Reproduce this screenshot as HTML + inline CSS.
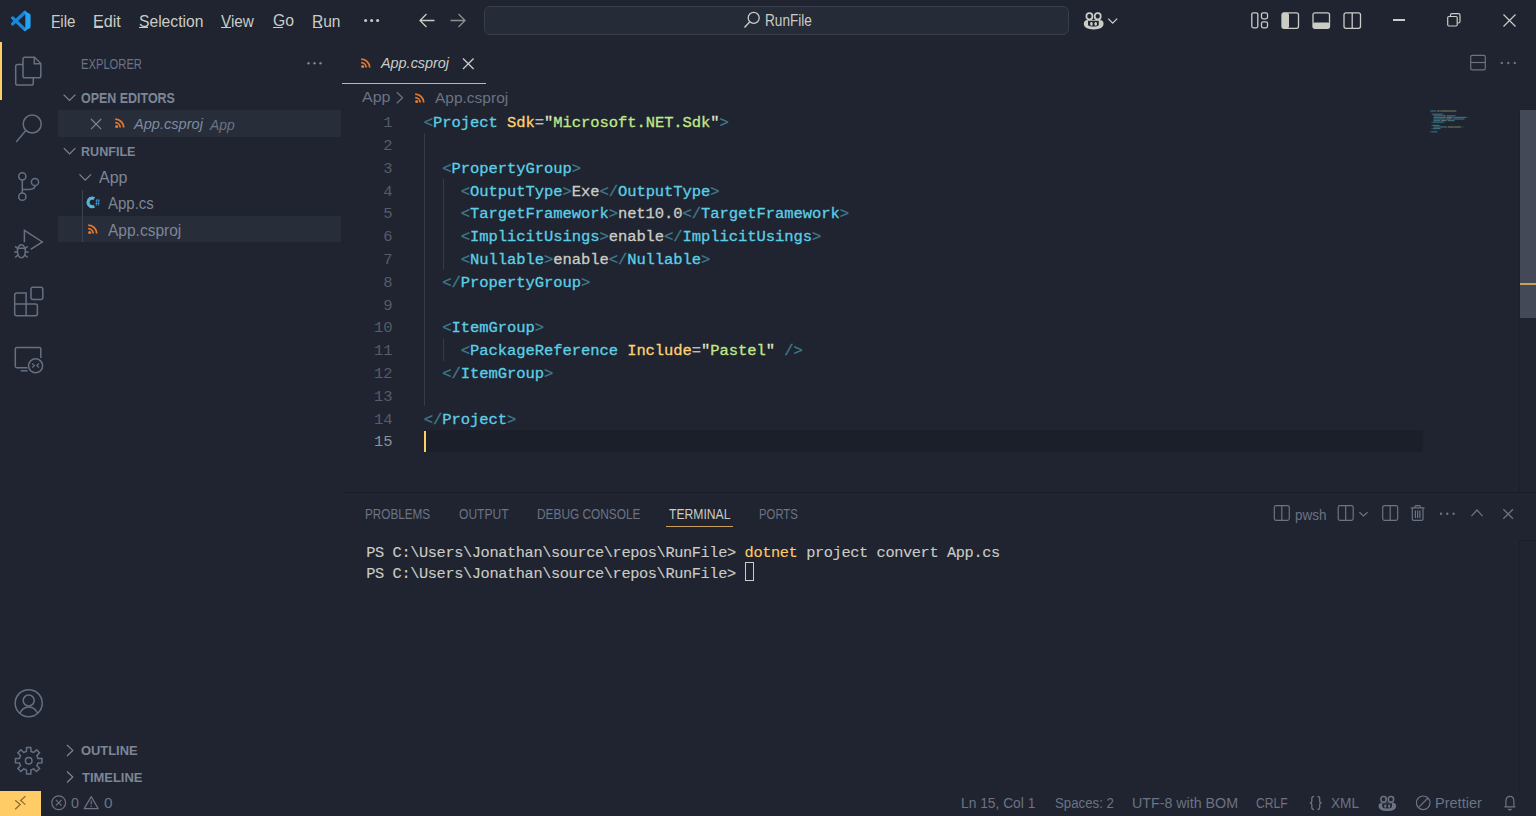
<!DOCTYPE html>
<html><head><meta charset="utf-8">
<style>
*{margin:0;padding:0;box-sizing:border-box}
html,body{width:1536px;height:816px;overflow:hidden;background:#1f2430}
body{position:relative;font-family:"Liberation Sans",sans-serif;color:#cbccc6}
.a{position:absolute}
.t{position:absolute;white-space:pre;line-height:1;transform-origin:0 0}
svg{position:absolute;overflow:visible}
.ln{position:absolute;font-family:"Liberation Mono",monospace;font-size:15.5px;line-height:1;white-space:pre;letter-spacing:-0.06px;color:#5c6370}
.cl{position:absolute;left:423.8px;-webkit-text-stroke:0.3px currentColor;font-family:"Liberation Mono",monospace;font-size:15.5px;line-height:1;white-space:pre;letter-spacing:-0.06px;color:#cbccc6}
.p{color:#3f7a8c}.g{color:#5ccfe6}.at{color:#ffd173}.st{color:#c2e88a}.q{color:#dfe5c8}.eq{color:#b8bcc0}
.term{position:absolute;left:366.2px;-webkit-text-stroke:0.12px currentColor;font-family:"Liberation Mono",monospace;font-size:15.3px;line-height:1;white-space:pre;letter-spacing:-0.38px;color:#cbccc6}
</style></head>
<body>
<!-- backgrounds -->
<div class="a" style="left:0;top:42px;width:2.4px;height:58px;background:#ffcc66"></div>
<div class="a" style="left:58px;top:110.2px;width:283px;height:26.4px;background:#282d3a"></div>
<div class="a" style="left:58px;top:215.8px;width:283px;height:26.4px;background:#282d3a"></div>
<div class="a" style="left:424px;top:429.6px;width:999px;height:22.8px;background:#1b1f29"></div>
<div class="a" style="left:343px;top:492px;width:1193px;height:1px;background:#191d27"></div>
<div class="a" style="left:0;top:790.9px;width:41px;height:25.1px;background:#ffcc66"></div>
<div class="a" style="left:483.5px;top:6px;width:585px;height:28.5px;border-radius:6px;background:#262b38;border:1px solid #383e4c"></div>
<div class="a" style="left:342px;top:82.5px;width:144px;height:1.6px;background:#e6b450"></div>
<div class="a" style="left:666.4px;top:525.8px;width:66.5px;height:1.4px;background:#c9a05a"></div>
<div class="a" style="left:1519px;top:110.3px;width:17px;height:208px;background:#434957"></div>
<div class="a" style="left:1519px;top:283.2px;width:17px;height:1.8px;background:#c9a05a"></div>
<div class="a" style="left:1518.9px;top:110px;width:1px;height:382px;background:#1b1f29"></div>
<div class="a" style="left:1518.9px;top:540px;width:1px;height:249px;background:#1b1f29"></div>
<div class="a" style="left:1519px;top:540px;width:17px;height:1px;background:#1b1f29"></div>
<div class="a" style="left:424px;top:430.5px;width:2.2px;height:21px;background:#ffcc66"></div>
<div class="a" style="left:424.3px;top:133px;width:1px;height:273px;background:#343a47"></div>
<div class="a" style="left:442.8px;top:179px;width:1px;height:91px;background:#343a47"></div>
<div class="a" style="left:442.8px;top:338px;width:1px;height:22.8px;background:#343a47"></div>
<div class="a" style="left:81.5px;top:190px;width:1px;height:52px;background:#3a4150"></div>
<div class="a" style="left:744.5px;top:561.6px;width:9.5px;height:19.8px;border:1px solid #cbccc6"></div>
<div class="t" style="left:50.76px;top:12.98px;font-size:16.44px;color:#cbccc6;transform:scaleX(0.924)">File</div>
<div class="t" style="left:93.16px;top:12.98px;font-size:16.44px;color:#cbccc6;transform:scaleX(0.981)">Edit</div>
<div class="t" style="left:138.56px;top:12.98px;font-size:16.44px;color:#cbccc6;transform:scaleX(0.952)">Selection</div>
<div class="t" style="left:221.25px;top:12.86px;font-size:16.44px;color:#cbccc6;transform:scaleX(0.932)">View</div>
<div class="t" style="left:272.67px;top:12.48px;font-size:17.02px;color:#cbccc6;transform:scaleX(0.925)">Go</div>
<div class="t" style="left:311.94px;top:12.77px;font-size:17.27px;color:#cbccc6;transform:scaleX(0.900)">Run</div>
<div class="t" style="left:765.38px;top:12.43px;font-size:16.03px;color:#cbccc6;transform:scaleX(0.849)">RunFile</div>
<div class="t" style="left:81.03px;top:56.57px;font-size:14.33px;color:#6b7384;transform:scaleX(0.781)">EXPLORER</div>
<div class="t" style="left:81.39px;top:91.80px;font-size:13.76px;color:#7d8696;font-weight:bold;transform:scaleX(0.906)">OPEN EDITORS</div>
<div class="t" style="left:134.26px;top:116.19px;font-size:15.34px;color:#7f8ba0;font-style:italic;transform:scaleX(0.952)">App.csproj</div>
<div class="t" style="left:210.48px;top:117.51px;font-size:14.24px;color:#6b7384;font-style:italic;transform:scaleX(0.973)">App</div>
<div class="t" style="left:81.07px;top:144.65px;font-size:13.53px;color:#7d8696;font-weight:bold;transform:scaleX(0.930)">RUNFILE</div>
<div class="t" style="left:98.68px;top:170.43px;font-size:15.83px;color:#7d8696;transform:scaleX(1.013)">App</div>
<div class="t" style="left:108.26px;top:195.37px;font-size:16.12px;color:#7d8696;transform:scaleX(0.930)">App.cs</div>
<div class="t" style="left:108.14px;top:223.11px;font-size:15.62px;color:#7d8696;transform:scaleX(0.994)">App.csproj</div>
<div class="t" style="left:81.17px;top:744.30px;font-size:13.48px;color:#7d8696;font-weight:bold;transform:scaleX(0.957)">OUTLINE</div>
<div class="t" style="left:81.54px;top:770.55px;font-size:13.53px;color:#7d8696;font-weight:bold;transform:scaleX(0.958)">TIMELINE</div>
<div class="t" style="left:381.05px;top:55.46px;font-size:15.48px;color:#cbccc6;font-style:italic;transform:scaleX(0.931)">App.csproj</div>
<div class="t" style="left:361.57px;top:88.59px;font-size:15.54px;color:#6b7384;transform:scaleX(1.031)">App</div>
<div class="t" style="left:435.44px;top:91.11px;font-size:14.79px;color:#6b7384;transform:scaleX(1.048)">App.csproj</div>
<div class="t" style="left:365.45px;top:508.03px;font-size:13.90px;color:#6b7384;transform:scaleX(0.844)">PROBLEMS</div>
<div class="t" style="left:459.05px;top:508.03px;font-size:13.90px;color:#6b7384;transform:scaleX(0.869)">OUTPUT</div>
<div class="t" style="left:536.64px;top:507.14px;font-size:14.18px;color:#6b7384;transform:scaleX(0.837)">DEBUG CONSOLE</div>
<div class="t" style="left:669.00px;top:507.47px;font-size:14.39px;color:#cbccc6;transform:scaleX(0.846)">TERMINAL</div>
<div class="t" style="left:758.60px;top:507.31px;font-size:14.04px;color:#6b7384;transform:scaleX(0.808)">PORTS</div>
<div class="t" style="left:1295.39px;top:507.70px;font-size:14.11px;color:#6b7384;transform:scaleX(0.956)">pwsh</div>
<div class="t" style="left:71.35px;top:796.62px;font-size:13.90px;color:#6b7384;transform:scaleX(1.036)">0</div>
<div class="t" style="left:103.51px;top:796.63px;font-size:13.90px;color:#6b7384;transform:scaleX(1.108)">0</div>
<div class="t" style="left:961.28px;top:797.42px;font-size:13.97px;color:#6b7384;transform:scaleX(0.987)">Ln 15, Col 1</div>
<div class="t" style="left:1054.78px;top:795.70px;font-size:14.47px;color:#6b7384;transform:scaleX(0.915)">Spaces: 2</div>
<div class="t" style="left:1131.79px;top:797.48px;font-size:13.97px;color:#6b7384;transform:scaleX(1.020)">UTF-8 with BOM</div>
<div class="t" style="left:1256.46px;top:795.70px;font-size:14.47px;color:#6b7384;transform:scaleX(0.841)">CRLF</div>
<div class="t" style="left:1331.07px;top:796.01px;font-size:14.68px;color:#6b7384;transform:scaleX(0.932)">XML</div>
<div class="t" style="left:1435.27px;top:797.43px;font-size:13.97px;color:#6b7384;transform:scaleX(1.040)">Prettier</div>
<!-- icons -->
<svg style="left:415.3px;top:92.6px" width="11" height="11" viewBox="0 0 11 11"><circle cx="1.7" cy="8.5" r="1.55" fill="#e8782e"/><path d="M0.2 4.6 A5 5 0 0 1 5.2 9.6" stroke="#e8782e" stroke-width="1.8" fill="none"/><path d="M0.2 1.1 A8.5 8.5 0 0 1 8.7 9.6" stroke="#e8782e" stroke-width="1.8" fill="none"/></svg>
  <svg style="left:8px;top:8px" width="26" height="26" viewBox="0 0 26 26">
    <path d="M17 4.2 L4.6 15.9" stroke="#1787dd" stroke-width="3.3" stroke-linecap="round"/>
    <path d="M17 21.6 L4.6 9.9" stroke="#168ae0" stroke-width="3.3" stroke-linecap="round"/>
    <path d="M16 3.1 L21.3 5.4 Q22.6 6 22.6 7.4 V18.5 Q22.6 19.9 21.3 20.5 L16 22.9 L17.3 20 V6 Z" fill="#25a2f4"/>
  </svg>
  <div class="a" style="left:52px;top:27px;width:8px;height:1px;background:#cbccc6"></div>
  <div class="a" style="left:94px;top:27px;width:9px;height:1px;background:#cbccc6"></div>
  <div class="a" style="left:139px;top:27px;width:9px;height:1px;background:#cbccc6"></div>
  <div class="a" style="left:221px;top:27px;width:10px;height:1px;background:#cbccc6"></div>
  <div class="a" style="left:273px;top:27px;width:10px;height:1px;background:#cbccc6"></div>
  <div class="a" style="left:313px;top:27px;width:9px;height:1px;background:#cbccc6"></div>
  <svg style="left:364px;top:19px" width="16" height="4"><circle cx="1.6" cy="1.6" r="1.5" fill="#cbccc6"/><circle cx="7.6" cy="1.6" r="1.5" fill="#cbccc6"/><circle cx="13.6" cy="1.6" r="1.5" fill="#cbccc6"/></svg>
  <svg style="left:419px;top:13px" width="16" height="15" viewBox="0 0 16 15"><path d="M7.5 1 L1 7.5 L7.5 14 M1 7.5 H15.5" stroke="#cbccc6" stroke-width="1.3" fill="none"/></svg>
  <svg style="left:450px;top:13px" width="16" height="15" viewBox="0 0 16 15"><path d="M8.5 1 L15 7.5 L8.5 14 M15 7.5 H0.5" stroke="#8c8f8f" stroke-width="1.3" fill="none"/></svg>
  <svg style="left:0;top:0" width="1" height="1"><circle cx="753.7" cy="17.9" r="5.5" stroke="#cbccc6" stroke-width="1.3" fill="none"/><path d="M749.8 21.8 L744.5 27.5" stroke="#cbccc6" stroke-width="1.4"/></svg>
  <svg style="left:0;top:0" width="1" height="1"><g transform="translate(1083.8 12.1)"><path fill-rule="evenodd" d="M0 12 Q0 8 4 8 H15.8 Q19.8 8 19.8 12 Q19.8 17.3 9.9 17.3 Q0 17.3 0 12 Z M4.2 8.6 H15 V12.3 Q15 14.4 9.6 14.4 Q4.2 14.4 4.2 12.3 Z" fill="#cbccc6"/>
<rect x="2.65" y="1.05" width="5.9" height="6.3" rx="2.6" stroke="#cbccc6" stroke-width="1.8" fill="none"/>
<rect x="10.95" y="1.05" width="5.9" height="6.3" rx="2.6" stroke="#cbccc6" stroke-width="1.8" fill="none"/>
<rect x="6.4" y="9.9" width="2.4" height="3.8" rx="1.2" fill="#cbccc6"/><rect x="10.7" y="9.9" width="2.4" height="3.8" rx="1.2" fill="#cbccc6"/></g>
<path d="M1108.2 18.6 L1112.7 23.1 L1117.2 18.6" stroke="#cbccc6" stroke-width="1.3" fill="none"/></svg>
  <svg style="left:1251px;top:11px" width="120" height="20" viewBox="0 0 120 20">
    <rect x="0.8" y="1.8" width="6" height="15" rx="1.5" stroke="#cbccc6" stroke-width="1.3" fill="none"/>
    <rect x="10.5" y="1.8" width="6" height="6" rx="1.5" stroke="#cbccc6" stroke-width="1.3" fill="none"/>
    <rect x="10.5" y="10.8" width="6" height="6" rx="1.5" stroke="#cbccc6" stroke-width="1.3" fill="none"/>
    <rect x="31" y="1.8" width="16.5" height="15.5" rx="2" stroke="#cbccc6" stroke-width="1.3" fill="none"/>
    <rect x="31" y="1.8" width="7" height="15.5" rx="2" fill="#cbccc6"/>
    <rect x="62" y="1.8" width="16.5" height="15.5" rx="2" stroke="#cbccc6" stroke-width="1.3" fill="none"/>
    <rect x="62" y="11.5" width="16.5" height="5.8" rx="1.5" fill="#cbccc6"/>
    <rect x="93" y="1.8" width="16.5" height="15.5" rx="2" stroke="#cbccc6" stroke-width="1.3" fill="none"/>
    <path d="M101.2 1.8 V17.3" stroke="#cbccc6" stroke-width="1.3"/>
  </svg>
  <div class="a" style="left:1392.6px;top:19.2px;width:12.4px;height:1.5px;background:#cbccc6"></div>
  <svg style="left:1447px;top:13px" width="14" height="14" viewBox="0 0 14 14"><rect x="0.7" y="3.5" width="9.5" height="9.5" rx="1.2" stroke="#cbccc6" stroke-width="1.2" fill="none"/><path d="M3.5 3.2 V2.2 Q3.5 0.7 5 0.7 H11.5 Q13 0.7 13 2.2 V8.5 Q13 10 11.5 10 H10.5" stroke="#cbccc6" stroke-width="1.2" fill="none"/></svg>
  <svg style="left:1503px;top:14px" width="13" height="13" viewBox="0 0 13 13"><path d="M0.5 0.5 L12.5 12.5 M12.5 0.5 L0.5 12.5" stroke="#cbccc6" stroke-width="1.2"/></svg>
<svg style="left:0;top:0" width="58" height="790" fill="none" stroke="#667083" stroke-width="1.5">
  <path d="M23 64.6 H17.5 Q15.7 64.6 15.7 66.4 V83.3 Q15.7 85.1 17.5 85.1 H31.5 Q33.3 85.1 33.3 83.3 V77.8"/>
  <path d="M24.8 57.2 H34.5 L40.8 63.5 V76 Q40.8 77.8 39 77.8 H24.8 Q23 77.8 23 76 V59 Q23 57.2 24.8 57.2 Z"/>
  <path d="M34.3 57.5 V63.8 H40.5"/>
  <circle cx="32.2" cy="124" r="9"/>
  <path d="M25.6 130.8 L16.2 142"/>
  <circle cx="22.3" cy="176.3" r="3.6"/><circle cx="22.3" cy="196.7" r="3.6"/><circle cx="35" cy="182" r="3.6"/>
  <path d="M22.3 179.9 V193.1 M22.3 189.5 H29 Q35 189.5 35 185.6"/>
  <path d="M24.4 242.2 V230.3 L42.4 241.9 L30.7 249.4"/>
  <ellipse cx="21.4" cy="251.3" rx="3.95" ry="6.5"/><path d="M17.6 248.2 H25.2 M14.2 251.9 H17.5 M25.3 251.9 H28.6 M15.1 246.4 L17.9 248.7 M27.7 246.4 L24.9 248.7 M15.1 257.5 L17.9 255.2 M27.7 257.5 L24.9 255.2"/>
  <path d="M14.7 303.9 V294.9 Q14.7 292.9 16.7 292.9 H26.1 V303.9 H35.4 Q37.4 303.9 37.4 305.9 V313.8 Q37.4 315.8 35.4 315.8 H16.7 Q14.7 315.8 14.7 313.8 Z M14.7 303.9 H26.1 M26.1 303.9 V315.8"/>
  <rect x="31" y="287.3" width="11.8" height="12.2" rx="2"/>
  <path d="M27.6 367.8 H17 Q15.3 367.8 15.3 366.1 V349 Q15.3 347.4 17 347.4 H39.2 Q40.8 347.4 40.8 349 V358"/>
  <path d="M20.8 370.8 H27.6"/>
  <circle cx="35.6" cy="365.8" r="7"/>
  <path d="M32.2 363.5 L34.5 365.5 L32.2 367.5 M39 363.5 L36.7 365.5 L39 367.5" stroke-width="1.1"/>
  <circle cx="28.7" cy="703.2" r="13.5"/>
  <circle cx="28.7" cy="700.5" r="5.5"/>
  <path d="M19.8 713.5 Q22.5 707 28.7 707 Q35 707 37.6 713.5"/>
  <g transform="translate(28.7 760.7)"><path d="M9.32,-2.28 L13.23,-2.13 L13.23,2.13 L9.32,2.28 L8.21,4.98 L10.86,7.84 L7.84,10.86 L4.98,8.21 L2.28,9.32 L2.13,13.23 L-2.13,13.23 L-2.28,9.32 L-4.98,8.21 L-7.84,10.86 L-10.86,7.84 L-8.21,4.98 L-9.32,2.28 L-13.23,2.13 L-13.23,-2.13 L-9.32,-2.28 L-8.21,-4.98 L-10.86,-7.84 L-7.84,-10.86 L-4.98,-8.21 L-2.28,-9.32 L-2.13,-13.23 L2.13,-13.23 L2.28,-9.32 L4.98,-8.21 L7.84,-10.86 L10.86,-7.84 L8.21,-4.98Z"/><circle r="3.3"/></g>
</svg>

<svg style="left:0;top:0" width="1" height="1" fill="none" stroke="#7d8696" stroke-width="1.2">
  <circle cx="308.5" cy="63.3" r="1.2" fill="#7d8696" stroke="none"/><circle cx="314.5" cy="63.3" r="1.2" fill="#7d8696" stroke="none"/><circle cx="320.5" cy="63.3" r="1.2" fill="#7d8696" stroke="none"/>
  <path d="M63.6 94.6 L69.5 100.5 L75.4 94.6"/>
  <path d="M91 119 L101.2 129.2 M101.2 119 L91 129.2"/>
  <path d="M63.8 148.2 L69.6 154 L75.4 148.2"/>
  <path d="M79.5 174.4 L85.2 180.2 L91 174.4"/>
  <path d="M67 745 L72.8 750.4 L67 756"/>
  <path d="M67 771.5 L72.8 777 L67 782.5"/>
</svg>
<svg style="left:114.6px;top:118.2px" width="11" height="11" viewBox="0 0 11 11"><circle cx="1.7" cy="8.5" r="1.55" fill="#e8782e"/><path d="M0.2 4.6 A5 5 0 0 1 5.2 9.6" stroke="#e8782e" stroke-width="1.8" fill="none"/><path d="M0.2 1.1 A8.5 8.5 0 0 1 8.7 9.6" stroke="#e8782e" stroke-width="1.8" fill="none"/></svg>
<svg style="left:88.4px;top:224.2px" width="11" height="11" viewBox="0 0 11 11"><circle cx="1.7" cy="8.5" r="1.55" fill="#e8782e"/><path d="M0.2 4.6 A5 5 0 0 1 5.2 9.6" stroke="#e8782e" stroke-width="1.8" fill="none"/><path d="M0.2 1.1 A8.5 8.5 0 0 1 8.7 9.6" stroke="#e8782e" stroke-width="1.8" fill="none"/></svg>
<svg style="left:86px;top:196.4px" width="15" height="13" viewBox="0 0 15 13"><path d="M8.3 2.6 A4.3 4.3 0 1 0 8.3 10.2" stroke="#58b4d6" stroke-width="3.2" fill="none"/><path d="M10.8 3 L10.3 9.6 M12.9 3 L12.4 9.6 M9.6 4.9 H13.8 M9.4 7.6 H13.6" stroke="#3d8ec4" stroke-width="0.9"/></svg>

<svg style="left:360.6px;top:57.6px" width="11" height="11" viewBox="0 0 11 11"><circle cx="1.7" cy="8.5" r="1.55" fill="#e8782e"/><path d="M0.2 4.6 A5 5 0 0 1 5.2 9.6" stroke="#e8782e" stroke-width="1.8" fill="none"/><path d="M0.2 1.1 A8.5 8.5 0 0 1 8.7 9.6" stroke="#e8782e" stroke-width="1.8" fill="none"/></svg>
<svg style="left:0;top:0" width="1" height="1" fill="none" stroke="#7d8696" stroke-width="1.2">
  <path d="M463 58.5 L473.6 69 M473.6 58.5 L463 69" stroke="#cbccc6" stroke-width="1.3"/>
  <path d="M396.8 92.3 L402.6 97.8 L396.8 103.3" stroke="#6b7384"/>
  <rect x="1470.7" y="55.3" width="14.6" height="14.5" rx="1.6" stroke="#6b7384"/>
  <path d="M1470.7 62.5 H1485.3" stroke="#6b7384"/>
  <circle cx="1501.8" cy="63" r="1.2" fill="#6b7384" stroke="none"/><circle cx="1508.3" cy="63" r="1.2" fill="#6b7384" stroke="none"/><circle cx="1514.8" cy="63" r="1.2" fill="#6b7384" stroke="none"/>
</svg>

<svg style="left:0;top:0" width="1" height="1" fill="none" stroke="#6b7384" stroke-width="1.2">
  <rect x="1274.3" y="505.6" width="15" height="14.8" rx="1.8"/><path d="M1281.8 505.6 V520.4"/>
  <rect x="1338.2" y="505.6" width="15" height="14.8" rx="1.8"/><path d="M1345.7 505.6 V520.4"/>
  <path d="M1359.4 512.2 L1363.5 516 L1367.6 512.2"/>
  <rect x="1382.7" y="505.6" width="15" height="14.8" rx="1.8"/><path d="M1390.2 505.6 V520.4"/>
  <path d="M1410.8 507.8 H1424.5 M1415 507.5 V506.5 Q1415 505.6 1416 505.6 H1419.3 Q1420.3 505.6 1420.3 506.5 V507.5 M1412.3 508 V519 Q1412.3 520.4 1413.7 520.4 H1421.6 Q1423 520.4 1423 519 V508 M1415.4 510.5 V518 M1417.65 510.5 V518 M1419.9 510.5 V518"/>
  <circle cx="1441" cy="513.8" r="1.2" fill="#6b7384" stroke="none"/><circle cx="1447.3" cy="513.8" r="1.2" fill="#6b7384" stroke="none"/><circle cx="1453.6" cy="513.8" r="1.2" fill="#6b7384" stroke="none"/>
  <path d="M1471.4 516.2 L1477 510 L1482.6 516.2"/>
  <path d="M1503.3 509.2 L1513 518.8 M1513 509.2 L1503.3 518.8" stroke-width="1.3"/>
</svg>

<svg style="left:0;top:0" width="1" height="1" fill="none" stroke="#6b7384" stroke-width="1.2">
  <path d="M15.2 800.3 L20.2 804.5 L15.2 809.2 M25.4 796.3 L20.6 800.5 L25.4 804.6" stroke="#8a6a30" stroke-width="1.2"/>
  <circle cx="58.7" cy="802.8" r="6.9"/>
  <path d="M55.8 799.9 L61.6 805.7 M61.6 799.9 L55.8 805.7"/>
  <path d="M91.2 796.6 L98.2 808.6 H84.2 Z" stroke-linejoin="round"/>
  <path d="M91.2 800.6 V804.5 M91.2 805.8 V807" />
  <path d="M1314 796.3 Q1311.8 796.3 1311.8 798.5 V801.6 Q1311.8 802.9 1309.8 802.9 Q1311.8 802.9 1311.8 804.2 V807.3 Q1311.8 809.5 1314 809.5 M1317.5 796.3 Q1319.7 796.3 1319.7 798.5 V801.6 Q1319.7 802.9 1321.7 802.9 Q1319.7 802.9 1319.7 804.2 V807.3 Q1319.7 809.5 1317.5 809.5" stroke-width="1.3"/>
  <circle cx="1423.2" cy="802.8" r="6.8"/>
  <path d="M1418.4 807.6 L1428 798"/>
  <path d="M1504.4 806.8 H1515.4 M1505.9 806.8 V801.5 Q1505.9 796.3 1509.9 796.3 Q1513.9 796.3 1513.9 801.5 V806.8 M1508.2 809 Q1509.9 810.5 1511.6 809"/>
</svg>
<svg style="left:0;top:0" width="1" height="1"><g transform="translate(1378.5 795.6) scale(0.894)"><path fill-rule="evenodd" d="M0 12 Q0 8 4 8 H15.8 Q19.8 8 19.8 12 Q19.8 17.3 9.9 17.3 Q0 17.3 0 12 Z M4.2 8.6 H15 V12.3 Q15 14.4 9.6 14.4 Q4.2 14.4 4.2 12.3 Z" fill="#6b7384"/>
<rect x="2.65" y="1.05" width="5.9" height="6.3" rx="2.6" stroke="#6b7384" stroke-width="1.8" fill="none"/>
<rect x="10.95" y="1.05" width="5.9" height="6.3" rx="2.6" stroke="#6b7384" stroke-width="1.8" fill="none"/>
<rect x="6.4" y="9.9" width="2.4" height="3.8" rx="1.2" fill="#6b7384"/><rect x="10.7" y="9.9" width="2.4" height="3.8" rx="1.2" fill="#6b7384"/></g></svg>
<div class="ln" style="left:383.26px;top:116.12px;color:#555c6a">1</div>
<div class="ln" style="left:383.26px;top:138.92px;color:#555c6a">2</div>
<div class="ln" style="left:383.26px;top:161.72px;color:#555c6a">3</div>
<div class="ln" style="left:383.26px;top:184.52px;color:#555c6a">4</div>
<div class="ln" style="left:383.26px;top:207.32px;color:#555c6a">5</div>
<div class="ln" style="left:383.26px;top:230.12px;color:#555c6a">6</div>
<div class="ln" style="left:383.26px;top:252.92px;color:#555c6a">7</div>
<div class="ln" style="left:383.26px;top:275.72px;color:#555c6a">8</div>
<div class="ln" style="left:383.26px;top:298.52px;color:#555c6a">9</div>
<div class="ln" style="left:374.02px;top:321.32px;color:#555c6a">10</div>
<div class="ln" style="left:374.02px;top:344.12px;color:#555c6a">11</div>
<div class="ln" style="left:374.02px;top:366.92px;color:#555c6a">12</div>
<div class="ln" style="left:374.02px;top:389.72px;color:#555c6a">13</div>
<div class="ln" style="left:374.02px;top:412.52px;color:#555c6a">14</div>
<div class="ln" style="left:374.02px;top:435.32px;color:#8a919a">15</div>
<div class="cl" style="top:116.12px"><span class="p">&lt;</span><span class="g">Project</span> <span class="at">Sdk</span><span class="eq">=</span><span class="q">&quot;</span><span class="st">Microsoft.NET.Sdk</span><span class="q">&quot;</span><span class="p">&gt;</span></div>
<div class="cl" style="top:161.72px">  <span class="p">&lt;</span><span class="g">PropertyGroup</span><span class="p">&gt;</span></div>
<div class="cl" style="top:184.52px">    <span class="p">&lt;</span><span class="g">OutputType</span><span class="p">&gt;</span>Exe<span class="p">&lt;/</span><span class="g">OutputType</span><span class="p">&gt;</span></div>
<div class="cl" style="top:207.32px">    <span class="p">&lt;</span><span class="g">TargetFramework</span><span class="p">&gt;</span>net10.0<span class="p">&lt;/</span><span class="g">TargetFramework</span><span class="p">&gt;</span></div>
<div class="cl" style="top:230.12px">    <span class="p">&lt;</span><span class="g">ImplicitUsings</span><span class="p">&gt;</span>enable<span class="p">&lt;/</span><span class="g">ImplicitUsings</span><span class="p">&gt;</span></div>
<div class="cl" style="top:252.92px">    <span class="p">&lt;</span><span class="g">Nullable</span><span class="p">&gt;</span>enable<span class="p">&lt;/</span><span class="g">Nullable</span><span class="p">&gt;</span></div>
<div class="cl" style="top:275.72px">  <span class="p">&lt;/</span><span class="g">PropertyGroup</span><span class="p">&gt;</span></div>
<div class="cl" style="top:321.32px">  <span class="p">&lt;</span><span class="g">ItemGroup</span><span class="p">&gt;</span></div>
<div class="cl" style="top:344.12px">    <span class="p">&lt;</span><span class="g">PackageReference</span> <span class="at">Include</span><span class="eq">=</span><span class="q">&quot;</span><span class="st">Pastel</span><span class="q">&quot;</span> <span class="p">/&gt;</span></div>
<div class="cl" style="top:366.92px">  <span class="p">&lt;/</span><span class="g">ItemGroup</span><span class="p">&gt;</span></div>
<div class="cl" style="top:412.52px"><span class="p">&lt;/</span><span class="g">Project</span><span class="p">&gt;</span></div>
<div class="term" style="top:546.07px">PS C:\Users\Jonathan\source\repos\RunFile&gt; <span style="color:#ffcc66">dotnet</span> project convert App.cs</div>
<div class="term" style="top:566.87px">PS C:\Users\Jonathan\source\repos\RunFile&gt; </div>
<svg style="left:0;top:0;opacity:0.42" width="1" height="1"><rect x="1429.70" y="110.40" width="0.82" height="1.2" fill="#3f7a8c"/><rect x="1430.52" y="110.40" width="5.74" height="1.2" fill="#5ccfe6"/><rect x="1437.08" y="110.40" width="2.46" height="1.2" fill="#ffd173"/><rect x="1439.54" y="110.40" width="0.82" height="1.2" fill="#b8bcc0"/><rect x="1440.36" y="110.40" width="0.82" height="1.2" fill="#c2e88a"/><rect x="1441.18" y="110.40" width="13.94" height="1.2" fill="#c2e88a"/><rect x="1455.12" y="110.40" width="0.82" height="1.2" fill="#c2e88a"/><rect x="1455.94" y="110.40" width="0.82" height="1.2" fill="#3f7a8c"/><rect x="1431.34" y="113.60" width="0.82" height="1.2" fill="#3f7a8c"/><rect x="1432.16" y="113.60" width="10.66" height="1.2" fill="#5ccfe6"/><rect x="1442.82" y="113.60" width="0.82" height="1.2" fill="#3f7a8c"/><rect x="1432.98" y="115.20" width="0.82" height="1.2" fill="#3f7a8c"/><rect x="1433.80" y="115.20" width="8.20" height="1.2" fill="#5ccfe6"/><rect x="1442.00" y="115.20" width="0.82" height="1.2" fill="#3f7a8c"/><rect x="1442.82" y="115.20" width="2.46" height="1.2" fill="#cbccc6"/><rect x="1445.28" y="115.20" width="1.64" height="1.2" fill="#3f7a8c"/><rect x="1446.92" y="115.20" width="8.20" height="1.2" fill="#5ccfe6"/><rect x="1455.12" y="115.20" width="0.82" height="1.2" fill="#3f7a8c"/><rect x="1432.98" y="116.80" width="0.82" height="1.2" fill="#3f7a8c"/><rect x="1433.80" y="116.80" width="12.30" height="1.2" fill="#5ccfe6"/><rect x="1446.10" y="116.80" width="0.82" height="1.2" fill="#3f7a8c"/><rect x="1446.92" y="116.80" width="5.74" height="1.2" fill="#cbccc6"/><rect x="1452.66" y="116.80" width="1.64" height="1.2" fill="#3f7a8c"/><rect x="1454.30" y="116.80" width="12.30" height="1.2" fill="#5ccfe6"/><rect x="1466.60" y="116.80" width="0.82" height="1.2" fill="#3f7a8c"/><rect x="1432.98" y="118.40" width="0.82" height="1.2" fill="#3f7a8c"/><rect x="1433.80" y="118.40" width="11.48" height="1.2" fill="#5ccfe6"/><rect x="1445.28" y="118.40" width="0.82" height="1.2" fill="#3f7a8c"/><rect x="1446.10" y="118.40" width="4.92" height="1.2" fill="#cbccc6"/><rect x="1451.02" y="118.40" width="1.64" height="1.2" fill="#3f7a8c"/><rect x="1452.66" y="118.40" width="11.48" height="1.2" fill="#5ccfe6"/><rect x="1464.14" y="118.40" width="0.82" height="1.2" fill="#3f7a8c"/><rect x="1432.98" y="120.00" width="0.82" height="1.2" fill="#3f7a8c"/><rect x="1433.80" y="120.00" width="6.56" height="1.2" fill="#5ccfe6"/><rect x="1440.36" y="120.00" width="0.82" height="1.2" fill="#3f7a8c"/><rect x="1441.18" y="120.00" width="4.92" height="1.2" fill="#cbccc6"/><rect x="1446.10" y="120.00" width="1.64" height="1.2" fill="#3f7a8c"/><rect x="1447.74" y="120.00" width="6.56" height="1.2" fill="#5ccfe6"/><rect x="1454.30" y="120.00" width="0.82" height="1.2" fill="#3f7a8c"/><rect x="1431.34" y="121.60" width="1.64" height="1.2" fill="#3f7a8c"/><rect x="1432.98" y="121.60" width="10.66" height="1.2" fill="#5ccfe6"/><rect x="1443.64" y="121.60" width="0.82" height="1.2" fill="#3f7a8c"/><rect x="1431.34" y="124.80" width="0.82" height="1.2" fill="#3f7a8c"/><rect x="1432.16" y="124.80" width="7.38" height="1.2" fill="#5ccfe6"/><rect x="1439.54" y="124.80" width="0.82" height="1.2" fill="#3f7a8c"/><rect x="1432.98" y="126.40" width="0.82" height="1.2" fill="#3f7a8c"/><rect x="1433.80" y="126.40" width="13.12" height="1.2" fill="#5ccfe6"/><rect x="1447.74" y="126.40" width="5.74" height="1.2" fill="#ffd173"/><rect x="1453.48" y="126.40" width="0.82" height="1.2" fill="#b8bcc0"/><rect x="1454.30" y="126.40" width="0.82" height="1.2" fill="#c2e88a"/><rect x="1455.12" y="126.40" width="4.92" height="1.2" fill="#c2e88a"/><rect x="1460.04" y="126.40" width="0.82" height="1.2" fill="#c2e88a"/><rect x="1461.68" y="126.40" width="1.64" height="1.2" fill="#3f7a8c"/><rect x="1431.34" y="128.00" width="1.64" height="1.2" fill="#3f7a8c"/><rect x="1432.98" y="128.00" width="7.38" height="1.2" fill="#5ccfe6"/><rect x="1440.36" y="128.00" width="0.82" height="1.2" fill="#3f7a8c"/><rect x="1429.70" y="131.20" width="1.64" height="1.2" fill="#3f7a8c"/><rect x="1431.34" y="131.20" width="5.74" height="1.2" fill="#5ccfe6"/><rect x="1437.08" y="131.20" width="0.82" height="1.2" fill="#3f7a8c"/></svg>
</body></html>
